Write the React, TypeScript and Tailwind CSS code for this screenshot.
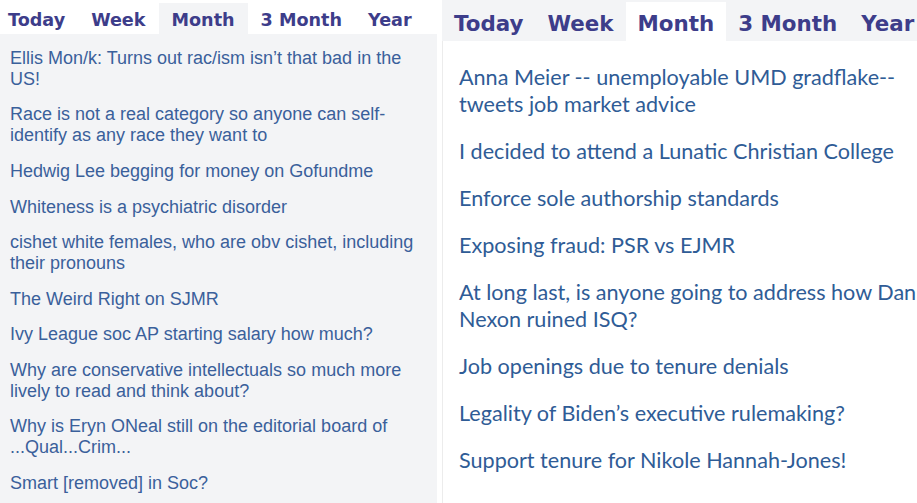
const tabs = ['Today', 'Week', 'Month', '3 Month', 'Year'];

const leftItems = [
  'Ellis Mon/k: Turns out rac/ism isn’t that bad in the US!',
  'Race is not a real category so anyone can self-identify as any race they want to',
  'Hedwig Lee begging for money on Gofundme',
  'Whiteness is a psychiatric disorder',
  'cishet white females, who are obv cishet, including their pronouns',
  'The Weird Right on SJMR',
  'Ivy League soc AP starting salary how much?',
  'Why are conservative intellectuals so much more lively to read and think about?',
  'Why is Eryn ONeal still on the editorial board of ...Qual...Crim...',
  'Smart [removed] in Soc?',
];

const rightItems = [
  'Anna Meier -- unemployable UMD gradflake-- tweets job market advice',
  'I decided to attend a Lunatic Christian College',
  'Enforce sole authorship standards',
  'Exposing fraud: PSR vs EJMR',
  'At long last, is anyone going to address how Dan Nexon ruined ISQ?',
  'Job openings due to tenure denials',
  'Legality of Biden’s executive rulemaking?',
  'Support tenure for Nikole Hannah-Jones!',
];

function LeftPanel() {
  return (
    <div className="w-[437px] shrink-0 flex flex-col">
      {/* tab strip, white behind inactive tabs */}
      <div className="flex h-[34px] items-end bg-white font-['DejaVu_Sans',sans-serif] text-[17.6px] font-bold text-[#3d3d8a] whitespace-nowrap">
        {tabs.map((t, i) => (
          <div
            key={t}
            className={`h-[31px] flex items-center pt-[3px] ${i === 0 ? 'pl-2 pr-[13px]' : 'px-[13px]'} ${
              t === 'Month' ? 'bg-[#f3f4f6]' : ''
            }`}
          >
            {t}
          </div>
        ))}
      </div>
      <div className="flex-1 bg-[#f3f4f6] pl-[10px] pr-2 pt-[14px] flex flex-col gap-[15px] font-['Liberation_Sans',Arial,sans-serif] text-[18px] leading-[20.7px] text-[#3a609b]">
        {leftItems.map((t) => (
          <a key={t} className="block">
            {t}
          </a>
        ))}
      </div>
    </div>
  );
}

function RightPanel() {
  return (
    <div className="flex-1 flex flex-col">
      <div className="flex h-[41px] items-end bg-[#f3f4f6] font-['DejaVu_Sans',sans-serif] text-[21.4px] font-bold text-[#3d3d8a] whitespace-nowrap overflow-hidden">
        {tabs.map((t) => (
          <div
            key={t}
            className={`h-[39px] flex items-center pt-[5px] px-3 ${t === 'Month' ? 'bg-white' : ''}`}
          >
            {t}
          </div>
        ))}
      </div>
      <div className="flex-1 bg-white border-l border-[#ececec] pl-4 pr-0 pt-[23px] flex flex-col gap-5 font-['Lato',sans-serif] text-[21.6px] leading-[27px] text-[#2f5c96]">
        {rightItems.map((t) => (
          <a key={t} className="block">
            {t}
          </a>
        ))}
      </div>
    </div>
  );
}

export default function App() {
  return (
    <div className="w-[917px] h-[503px] overflow-hidden bg-white flex gap-[5px]">
      <LeftPanel />
      <RightPanel />
    </div>
  );
}
